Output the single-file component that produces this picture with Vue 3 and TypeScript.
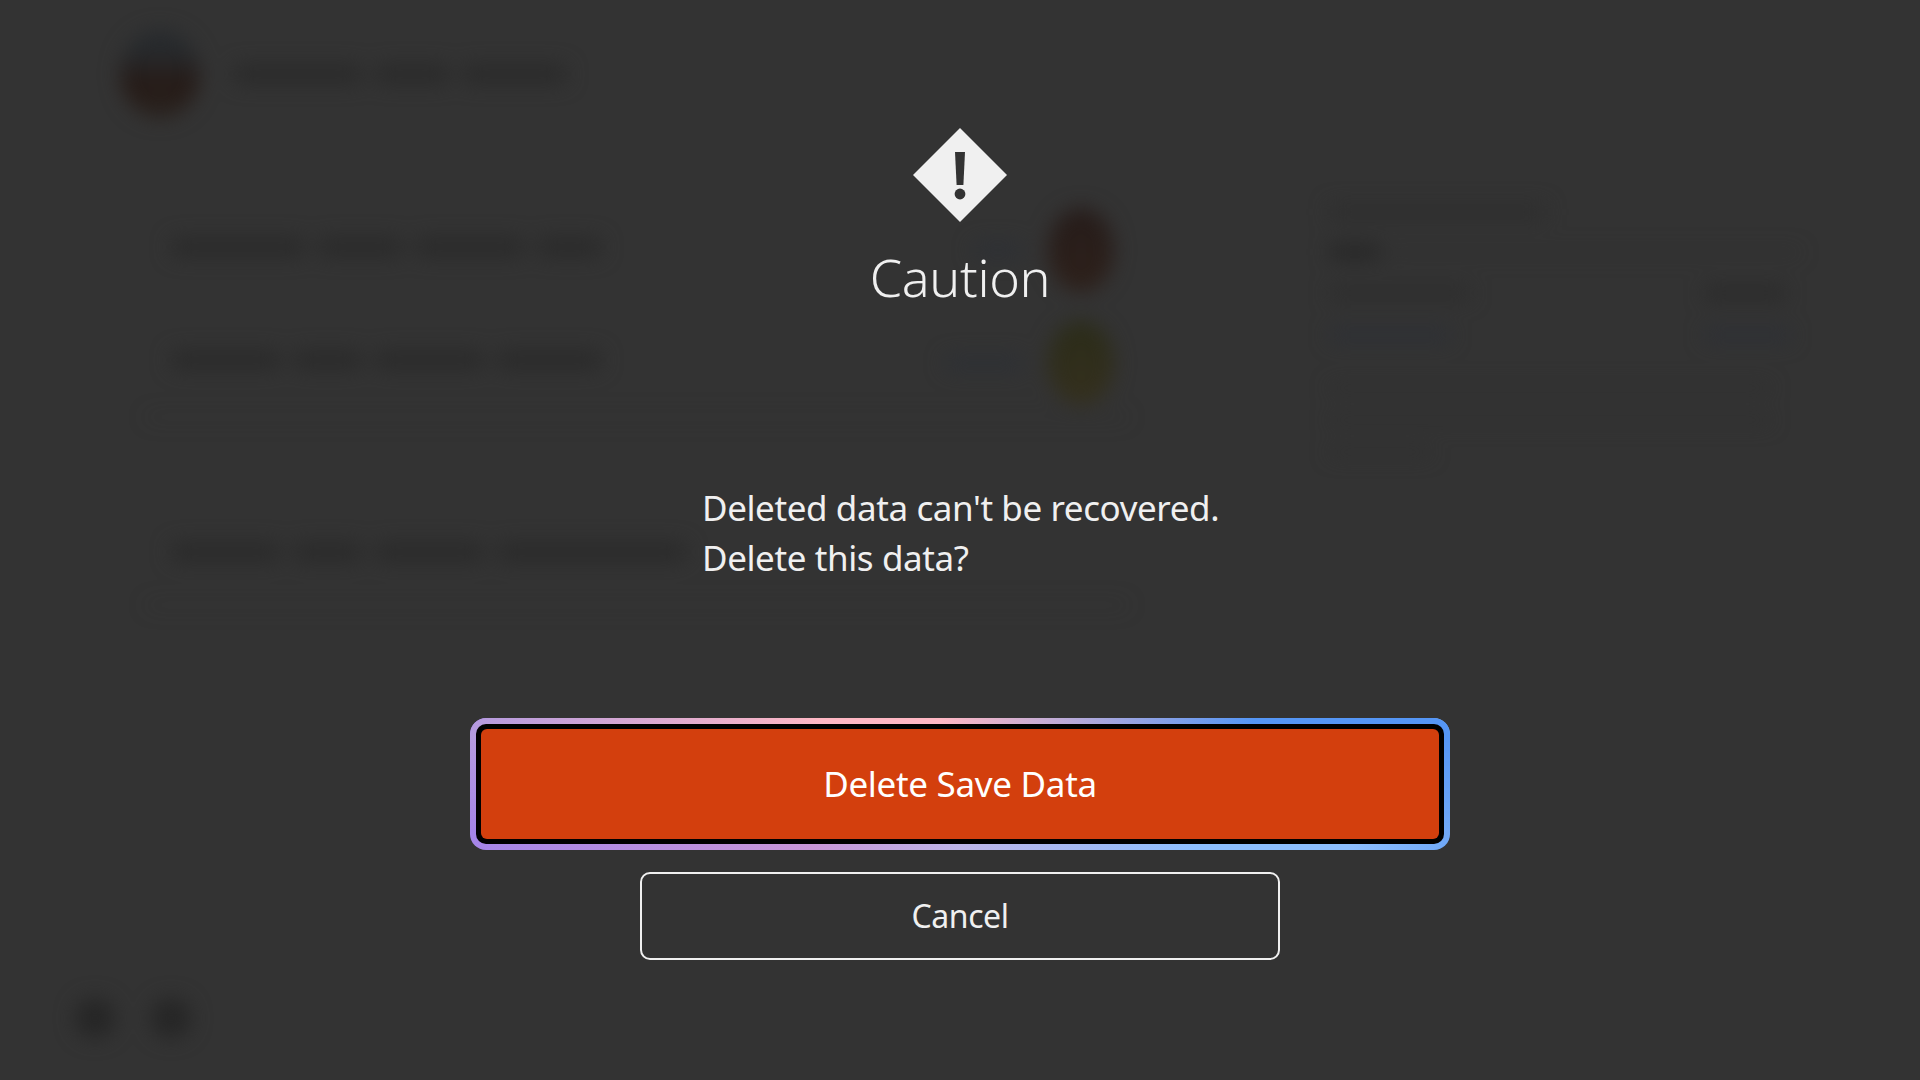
<script setup lang="ts">
interface Row { words: number[]; tag?: number; avatar?: string; line?: boolean }
const rows: Row[] = [
  { words: [135, 85, 110, 65], tag: 50, avatar: 'red' },
  { words: [110, 70, 110, 105], tag: 78, avatar: 'olive', line: true },
  { words: [110, 70, 110, 190], line: true },
]
</script>

<template>
  <div class="screen">
    <div class="backdrop" aria-hidden="true">
      <div class="top-bar">
        <div class="user-avatar"></div>
        <div class="blot-group title-blots">
          <span class="blot" style="width: 130px"></span>
          <span class="blot" style="width: 75px"></span>
          <span class="blot" style="width: 105px"></span>
        </div>
      </div>
      <div class="content">
        <div class="list">
          <div v-for="(row, i) in rows" :key="i" class="row" :class="{ tall: i === 2, lined: row.line }">
            <div class="blot-group">
              <span v-for="(w, j) in row.words" :key="j" class="blot" :style="{ width: w + 'px' }"></span>
            </div>
            <div v-if="row.avatar" class="row-end">
              <span class="tag" :style="{ width: row.tag + 'px' }"></span>
              <span class="mini-avatar" :class="row.avatar"></span>
            </div>
          </div>
        </div>
        <div class="side">
          <span class="side-heading"></span>
          <div class="side-label-row">
            <span class="side-label"></span>
            <span class="side-rule"></span>
          </div>
          <div class="side-stats">
            <div class="stat">
              <span class="stat-a"></span>
              <span class="stat-b"></span>
            </div>
            <div class="stat right">
              <span class="stat-a short"></span>
              <span class="stat-b short"></span>
            </div>
          </div>
          <div class="side-note">
            <span class="note-line"></span>
            <span class="note-line"></span>
            <span class="note-line tiny"></span>
          </div>
        </div>
      </div>
      <div class="foot-icons">
        <span class="foot-icon"></span>
        <span class="foot-icon"></span>
      </div>
    </div>

    <div class="dialog">
      <svg class="caution-icon" width="94" height="94" viewBox="0 0 94 94">
        <path d="M47 0 94 47 47 94 0 47Z" fill="#f0f0f0" />
        <path d="M42 24H52L50.4 57H43.6Z" fill="#333333" />
        <circle cx="47" cy="66" r="5.4" fill="#333333" />
      </svg>
      <h1 class="title">Caution</h1>
      <p class="message">Deleted data can't be recovered.<br />Delete this data?</p>
      <div class="focus-ring">
        <div class="focus-gap">
          <button class="btn-danger" type="button">Delete Save Data</button>
        </div>
      </div>
      <button class="btn-cancel" type="button">Cancel</button>
    </div>
  </div>
</template>

<style>
html,
body {
  margin: 0;
  background: #333333;
}
</style>

<style scoped>
.screen {
  position: relative;
  width: 1920px;
  height: 1080px;
  overflow: hidden;
  background: #333333;
  font-family: "Noto Sans", "Lato", sans-serif;
}

/* blurred page behind the dialog */
.backdrop {
  display: flex;
  flex-direction: column;
  height: 100%;
  box-sizing: border-box;
  padding-top: 30px;
  filter: blur(10px);
}
.top-bar {
  display: flex;
  align-items: center;
  gap: 33px;
  height: 88px;
  padding-left: 120px;
}
.user-avatar {
  width: 80px;
  height: 88px;
  border-radius: 50%;
  background: linear-gradient(#272a2d 0 25%, #261b17 60%, #2a231f);
}
.blot-group {
  display: flex;
  gap: 12px;
}
.blot {
  height: 18px;
  border-radius: 8px;
  background: #2a2a2a;
}
.content {
  display: flex;
  padding-top: 72px;
}
.list {
  box-sizing: border-box;
  width: 980px;
  margin-left: 147px;
  margin-right: 203px;
}
.row {
  display: flex;
  align-items: center;
  justify-content: space-between;
  box-sizing: border-box;
  height: 114px;
  padding: 0 13px 0 24px;
}
.row.lined {
  border-bottom: 2px solid #2f2f2f;
}
.row.tall {
  height: 188px;
  padding-top: 82px;
}
.row-end {
  display: flex;
  align-items: center;
  gap: 25px;
  margin-top: 6px;
}
.tag {
  height: 14px;
  border-radius: 6px;
  background: #2d3035;
}
.mini-avatar {
  width: 66px;
  height: 84px;
  border-radius: 50%;
}
.mini-avatar.red {
  background: linear-gradient(#261c1a, #2e211b);
}
.mini-avatar.olive {
  background: linear-gradient(#2b2c19, #35301e);
}
.side {
  display: flex;
  flex-direction: column;
  width: 470px;
  margin-top: 15px;
}
.side-heading {
  width: 215px;
  height: 14px;
  background: #2e2e2e;
}
.side-label-row {
  display: flex;
  align-items: center;
  gap: 10px;
  margin-top: 26px;
}
.side-label {
  width: 50px;
  height: 14px;
  background: #262626;
}
.side-rule {
  flex: 1;
  height: 3px;
  background: #2e2e2e;
}
.side-stats {
  display: flex;
  justify-content: space-between;
  margin-top: 28px;
  padding-right: 10px;
}
.stat {
  display: flex;
  flex-direction: column;
  gap: 30px;
}
.stat-a {
  width: 140px;
  height: 12px;
  background: #2d2d2d;
}
.stat-b {
  width: 120px;
  height: 12px;
  background: #2d3036;
}
.stat-a.short {
  width: 80px;
  background: #2a2a2a;
}
.stat-b.short {
  width: 85px;
}
.side-note {
  display: flex;
  flex-direction: column;
  gap: 26px;
  margin-top: 44px;
}
.note-line {
  width: 440px;
  height: 6px;
  background: #2f2f2f;
}
.note-line.tiny {
  width: 100px;
}
.foot-icons {
  position: absolute;
  left: 75px;
  bottom: 42px;
  display: flex;
  gap: 36px;
}
.foot-icon {
  width: 40px;
  height: 40px;
  border-radius: 50%;
  background: #262626;
}

/* dialog */
.dialog {
  position: absolute;
  inset: 0;
  display: flex;
  flex-direction: column;
  align-items: center;
  padding-top: 128px;
  box-sizing: border-box;
  color: #f0f0f0;
}
.caution-icon {
  display: block;
}
.title {
  margin: 20px 0 0;
  font-size: 52px;
  font-weight: 300;
  line-height: 70px;
  letter-spacing: -0.3px;
  font-variant-ligatures: none;
}
.message {
  width: 516px;
  margin: 171px 0 0;
  font-size: 35px;
  font-weight: 400;
  line-height: 50px;
  letter-spacing: -0.4px;
  white-space: nowrap;
}
.focus-ring {
  position: relative;
  box-sizing: border-box;
  width: 980px;
  height: 132px;
  margin-top: 135px;
  padding: 6px;
  border-radius: 16px;
  background: linear-gradient(90deg, #a585e8 0%, #c896d8 35%, #bcb4e8 50%, #8cbeff 74%, #8cbeff 90%, #6fa8f8 100%);
}
.focus-ring::before {
  content: "";
  position: absolute;
  inset: 0;
  border-radius: 16px;
  background: linear-gradient(90deg, #b49adf 0%, #ffb8c4 36%, #ffb8c4 48%, #5596f5 80%, #5596f5 100%);
  mask-image: linear-gradient(#000 15%, transparent 85%);
}
.focus-gap {
  position: relative;
  box-sizing: border-box;
  height: 100%;
  padding: 5px;
  border-radius: 10px;
  background: #000;
}
.btn-danger {
  display: block;
  width: 100%;
  height: 100%;
  padding: 0 0 2px;
  border: 0;
  border-radius: 6px;
  background: #d33f0d;
  color: #fff;
  font: 400 35px "Noto Sans", "Lato", sans-serif;
  letter-spacing: -0.3px;
}
.btn-cancel {
  box-sizing: border-box;
  width: 640px;
  height: 88px;
  margin-top: 22px;
  padding: 0 0 2px;
  border: 2px solid #f0f0f0;
  border-radius: 10px;
  background: transparent;
  color: #f0f0f0;
  font: 400 32px "Noto Sans", "Lato", sans-serif;
  letter-spacing: -0.4px;
}
</style>
